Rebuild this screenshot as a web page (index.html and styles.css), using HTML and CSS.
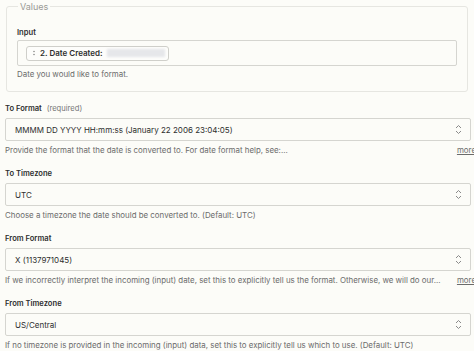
FILE: index.html
```html
<!DOCTYPE html>
<html lang="en">
<head>
  <meta charset="UTF-8">
  <meta name="viewport" content="width=device-width, initial-scale=1.0">
  <title>Format Date</title>
  <link rel="stylesheet" href="styles.css">
</head>
<body>
  <fieldset class="values">
    <legend>Values</legend>
    <div class="label">Input</div>
    <div class="input-box">
      <span class="pill">
        <svg class="handle" width="4" height="6" viewBox="0 0 4 6"><circle cx="2" cy="1.5" r="0.8"/><circle cx="2" cy="4.5" r="0.8"/></svg>
        <b>2. Date Created:</b>
        <span class="blur"></span>
      </span>
    </div>
    <div class="help">Date you would like to format.</div>
  </fieldset>

  <div class="field">
    <div class="label">To Format <span class="req">(required)</span></div>
    <div class="select">
      <span>MMMM DD YYYY HH:mm:ss (January 22 2006 23:04:05)</span>
      <svg class="chev" width="7" height="11" viewBox="0 0 7 11"><path d="M1 4 L3.5 1.5 L6 4 M1 7 L3.5 9.5 L6 7" fill="none" stroke="#8a8a8a" stroke-width="1"/></svg>
    </div>
    <div class="help row"><span>Provide the format that the date is converted to. For date format help, see:...</span><a class="more">more</a></div>
  </div>

  <div class="field">
    <div class="label">To Timezone</div>
    <div class="select">
      <span>UTC</span>
      <svg class="chev" width="7" height="11" viewBox="0 0 7 11"><path d="M1 4 L3.5 1.5 L6 4 M1 7 L3.5 9.5 L6 7" fill="none" stroke="#8a8a8a" stroke-width="1"/></svg>
    </div>
    <div class="help">Choose a timezone the date should be converted to. (Default: UTC)</div>
  </div>

  <div class="field">
    <div class="label">From Format</div>
    <div class="select">
      <span>X (1137971045)</span>
      <svg class="chev" width="7" height="11" viewBox="0 0 7 11"><path d="M1 4 L3.5 1.5 L6 4 M1 7 L3.5 9.5 L6 7" fill="none" stroke="#8a8a8a" stroke-width="1"/></svg>
    </div>
    <div class="help row"><span>If we incorrectly interpret the incoming (input) date, set this to explicitly tell us the format. Otherwise, we will do our...</span><a class="more">more</a></div>
  </div>

  <div class="field">
    <div class="label">From Timezone</div>
    <div class="select">
      <span>US/Central</span>
      <svg class="chev" width="7" height="11" viewBox="0 0 7 11"><path d="M1 4 L3.5 1.5 L6 4 M1 7 L3.5 9.5 L6 7" fill="none" stroke="#8a8a8a" stroke-width="1"/></svg>
    </div>
    <div class="help">If no timezone is provided in the incoming (input) data, set this to explicitly tell us which to use. (Default: UTC)</div>
  </div>
</body>
</html>
```

FILE: styles.css
```css
html, body {
  overflow: hidden;
}

body {
  font-family: Inter, 'Noto Sans', sans-serif;
  background-color: #fcfcf8;
  margin: 0;
  padding: 0 3px 0 5px;
  color: #2d2e2e;
  width: 466px;
}

.values {
  margin: 1px 3px 0 1px;
  padding: 15px 10px 11px 10px;
  border: 1px solid #e6e6e1;
  border-radius: 3px;
}

.values legend {
  color: #9a9a96;
  font-size: 9px;
  padding: 0 2px;
  margin-left: 1px;
}

.label {
  font-size: 7.6px;
  font-weight: 600;
  line-height: 12px;
  margin-bottom: 3px;
  color: #2d2e2e;
}

.values .label {
  margin-bottom: 1px;
}

.label .req {
  font-weight: 400;
  color: #777;
  margin-left: 3px;
}

.input-box {
  height: 24px;
  border: 1px solid #d5d5d0;
  border-radius: 2px;
  display: flex;
  align-items: center;
  padding-left: 8px;
}

.pill {
  display: flex;
  align-items: center;
  gap: 4px;
  height: 13px;
  width: 136px;
  padding-left: 5px;
  border: 1px solid #cfcfca;
  border-radius: 3px;
  font-size: 8px;
  background: #fdfdfb;
}

.pill b {
  font-weight: 600;
}

.handle {
  fill: #888;
}

.blur {
  width: 58px;
  height: 8px;
  background: #e6e7ea;
  filter: blur(1px);
}

.help {
  font-size: 7.9px;
  color: #6b6b6b;
  line-height: 12px;
  margin-top: 3px;
  white-space: nowrap;
}

.values .help {
  margin-top: 2px;
}

.field {
  margin-top: 11px;
}

.field + .field {
  margin-top: 12px;
}

.select {
  height: 21px;
  border: 1px solid #d5d5d0;
  border-radius: 2px;
  display: flex;
  align-items: center;
  justify-content: space-between;
  padding: 0 8px 0 9px;
  font-size: 8px;
  color: #2d2e2e;
}

.row {
  display: flex;
  justify-content: space-between;
  margin-right: -5px;
}

.more {
  color: #6b6b6b;
  text-decoration: underline;
}
```
